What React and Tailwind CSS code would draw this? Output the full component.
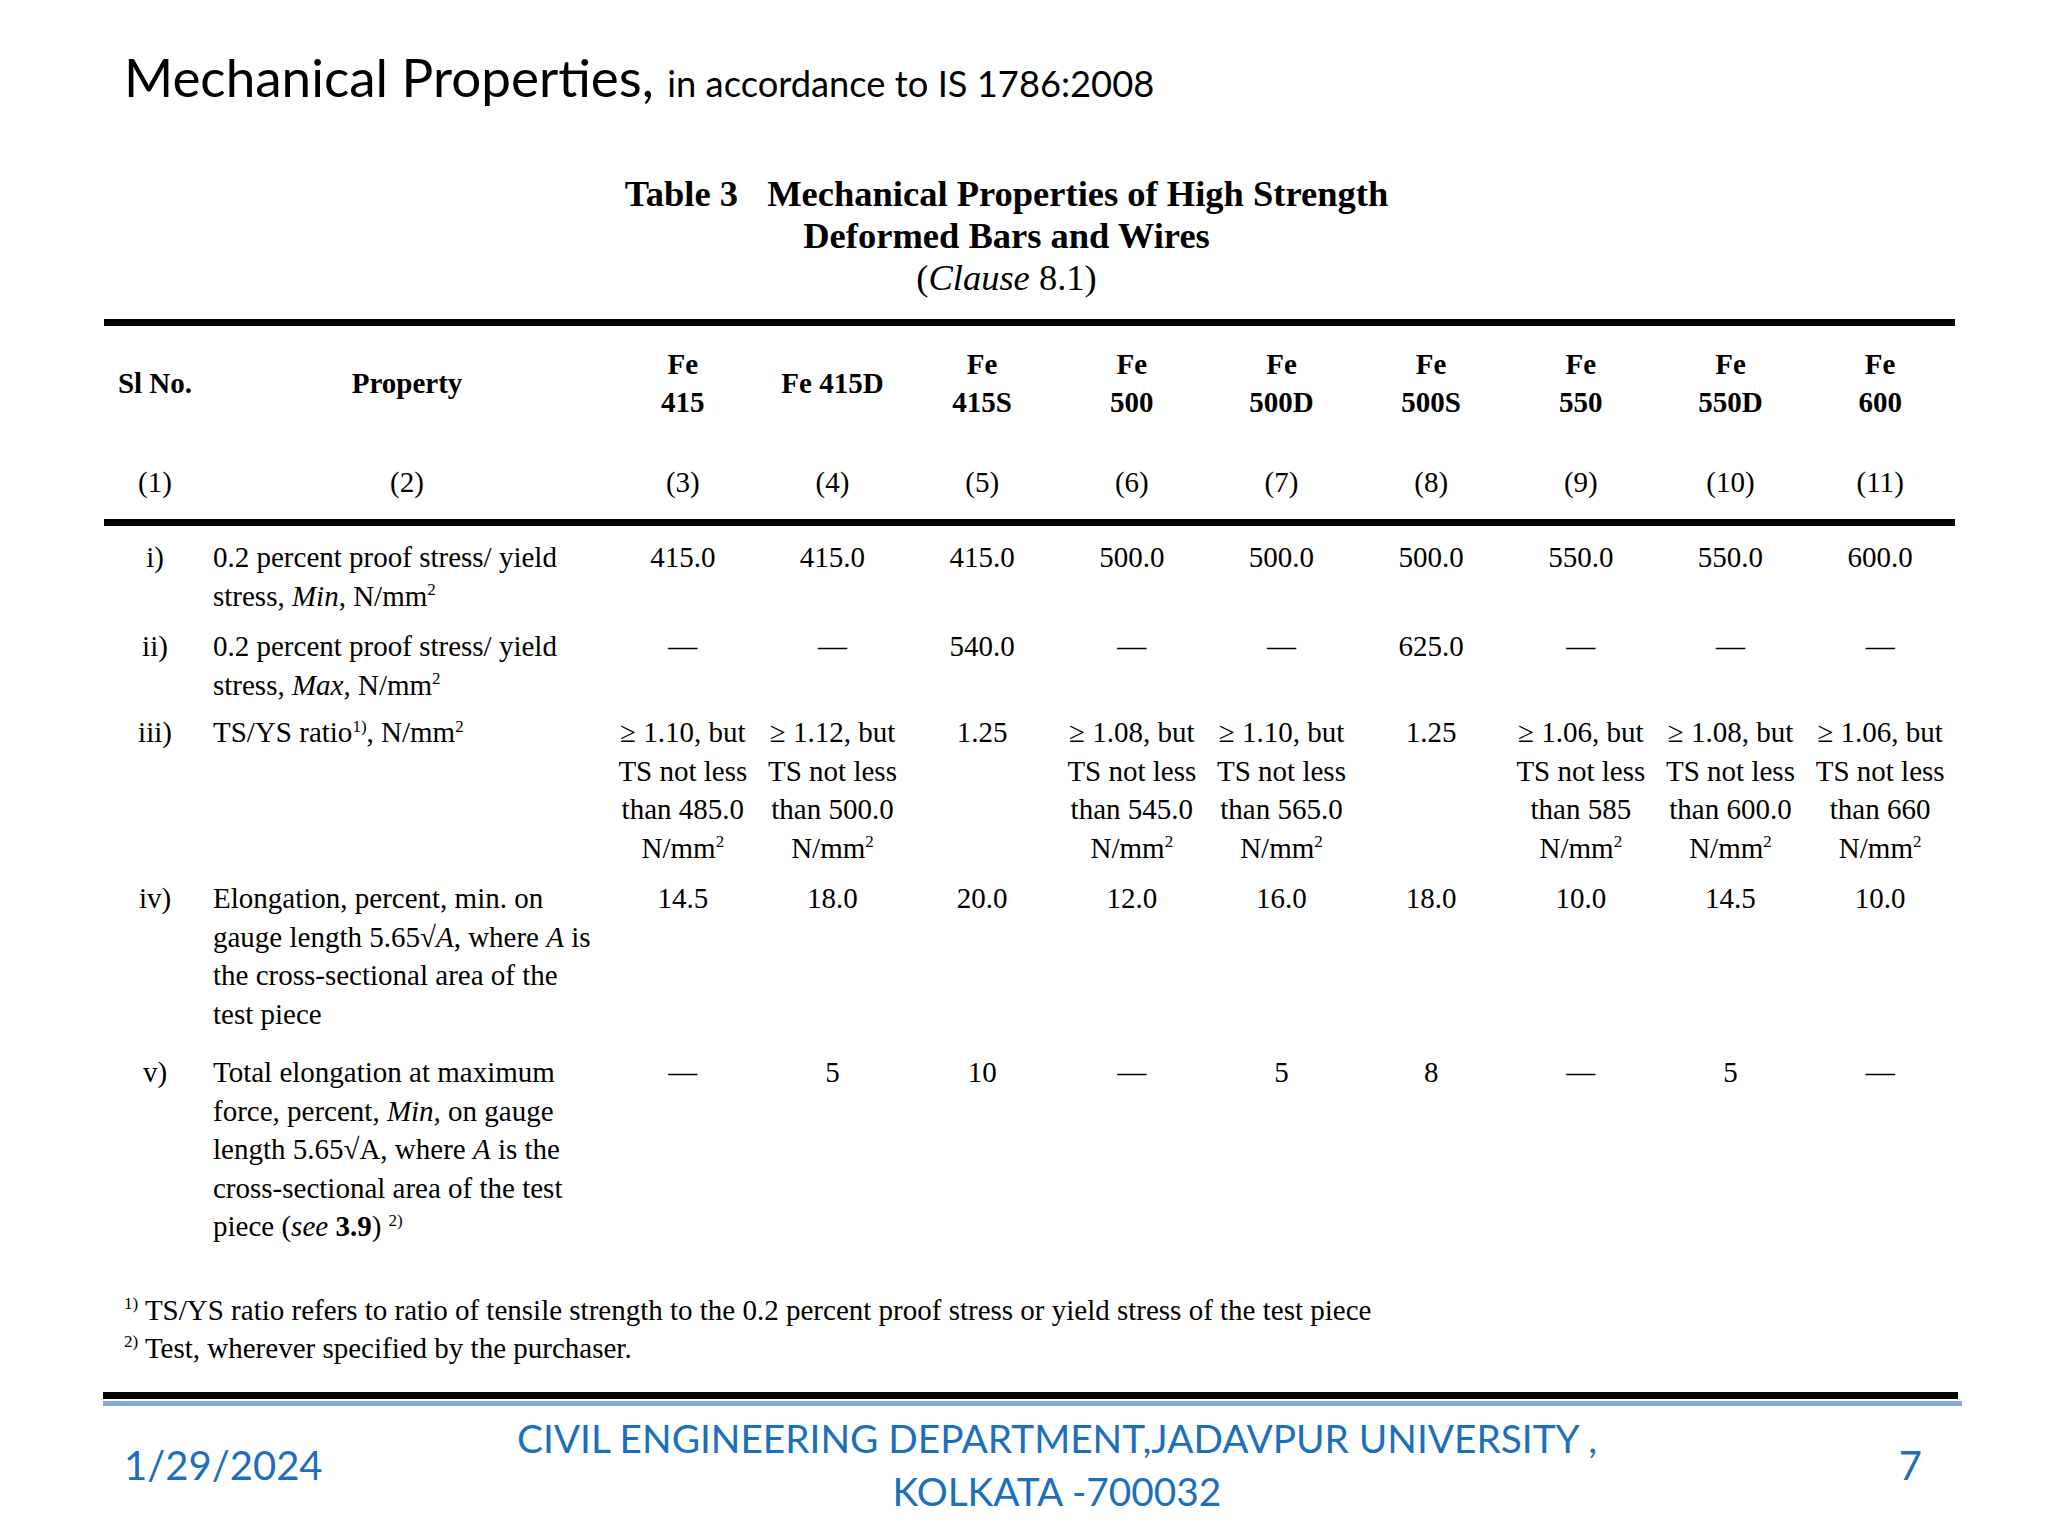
const Sup = ({ children }) => <sup className="text-[17px] top-[-0.6em]">{children}</sup>;

const ts = (ratio, min) => (
  <>
    ≥ {ratio}, but
    <br />
    TS not less
    <br />
    than {min}
    <br />
    N/mm<Sup>2</Sup>
  </>
);

const grades = [
  <>Fe<br />415</>,
  <>Fe 415D</>,
  <>Fe<br />415S</>,
  <>Fe<br />500</>,
  <>Fe<br />500D</>,
  <>Fe<br />500S</>,
  <>Fe<br />550</>,
  <>Fe<br />550D</>,
  <>Fe<br />600</>,
];

const rows = [
  {
    no: 'i)',
    pad: 'pt-[12px]',
    prop: <>0.2 percent proof stress/ yield<br />stress, <i>Min</i>, N/mm<Sup>2</Sup></>,
    vals: ['415.0', '415.0', '415.0', '500.0', '500.0', '500.0', '550.0', '550.0', '600.0'],
  },
  {
    no: 'ii)',
    pad: 'pt-[12px]',
    prop: <>0.2 percent proof stress/ yield<br />stress, <i>Max</i>, N/mm<Sup>2</Sup></>,
    vals: ['—', '—', '540.0', '—', '—', '625.0', '—', '—', '—'],
  },
  {
    no: 'iii)',
    pad: 'pt-[9px]',
    prop: <>TS/YS ratio<Sup>1)</Sup>, N/mm<Sup>2</Sup></>,
    vals: [ts('1.10', '485.0'), ts('1.12', '500.0'), '1.25', ts('1.08', '545.0'), ts('1.10', '565.0'), '1.25', ts('1.06', '585'), ts('1.08', '600.0'), ts('1.06', '660')],
  },
  {
    no: 'iv)',
    pad: 'pt-[12px]',
    prop: <>Elongation, percent, min. on<br />gauge length 5.65√<i>A</i>, where <i>A</i> is<br />the cross-sectional area of the<br />test piece</>,
    vals: ['14.5', '18.0', '20.0', '12.0', '16.0', '18.0', '10.0', '14.5', '10.0'],
  },
  {
    no: 'v)',
    pad: 'pt-[20px]',
    prop: <>Total elongation at maximum<br />force, percent, <i>Min,</i> on gauge<br />length 5.65√A, where <i>A</i> is the<br />cross-sectional area of the test<br />piece (<i>see</i> <b>3.9</b>) <Sup>2)</Sup></>,
    vals: ['—', '5', '10', '—', '5', '8', '—', '5', '—'],
  },
];

const cols = 'grid grid-cols-[102px_402px_repeat(9,1fr)]';

export default function App() {
  return (
    <div className="w-[2048px] h-[1536px] bg-white text-black overflow-hidden">
      {/* slide title */}
      <h1 className="pl-[124px] pt-[45px] leading-[64px] font-['Lato',_sans-serif] text-[53px] whitespace-nowrap">
        Mechanical Properties, <span className="text-[36.3px]">in accordance to IS 1786:2008</span>
      </h1>

      <div className="ml-[104px] mr-[93px] font-['Liberation_Serif',_'Times_New_Roman',_serif]">
        {/* caption */}
        <div className="mt-[58px] pr-[46px] text-center text-[36.5px] leading-[42px]">
          <div className="font-bold">
            <span className="mr-[20px]">Table 3</span> Mechanical Properties of High Strength
          </div>
          <div className="font-bold">Deformed Bars and Wires</div>
          <div>
            (<i>Clause</i> 8.1)
          </div>
        </div>

        <div className="mt-[20px] h-[7px] bg-black" />

        {/* header */}
        <div className="text-[29px] leading-[38px] pt-[19px] pb-[18px]">
          <div className={`${cols} items-center font-bold h-[76px]`}>
            <div className="text-center whitespace-nowrap">Sl No.</div>
            <div className="text-center">Property</div>
            {grades.map((g, i) => (
              <div key={i} className="text-center whitespace-nowrap">{g}</div>
            ))}
          </div>
          <div className={`${cols} mt-[42px]`}>
            {Array.from({ length: 11 }, (_, i) => (
              <div key={i} className="text-center">({i + 1})</div>
            ))}
          </div>
        </div>

        <div className="h-[7px] bg-black" />

        {/* body */}
        <div className="text-[29px] leading-[38.5px]">
          {rows.map((r) => (
            <div key={r.no} className={`${cols} ${r.pad}`}>
              <div className="text-center">{r.no}</div>
              <div className="pl-[7px] whitespace-nowrap">{r.prop}</div>
              {r.vals.map((v, i) => (
                <div key={i} className="text-center whitespace-nowrap">{v}</div>
              ))}
            </div>
          ))}
        </div>

        {/* footnotes */}
        <div className="mt-[45px] pl-[20px] text-[29px] leading-[38px] whitespace-nowrap">
          <div>
            <Sup>1)</Sup> TS/YS ratio refers to ratio of tensile strength to the 0.2 percent proof stress or yield stress of the test piece
          </div>
          <div>
            <Sup>2)</Sup> Test, wherever specified by the purchaser.
          </div>
        </div>
      </div>

      {/* bottom rules */}
      <div className="mt-[25px] ml-[103px] w-[1855px] h-[7px] bg-black" />
      <div className="mt-[2px] ml-[103px] w-[1859px] h-[5px] bg-[#86a8d4]" />

      {/* footer */}
      <div className="mt-[6px] flex items-center pl-[124px] pr-[126px] font-['Lato',_sans-serif] text-[#1c70bb] text-[40px]">
        <div className="w-[300px] whitespace-nowrap">1/29/2024</div>
        <div className="flex-1 text-center text-[38.8px] leading-[53px] whitespace-nowrap">
          <div>CIVIL ENGINEERING DEPARTMENT,JADAVPUR UNIVERSITY ,</div>
          <div>KOLKATA -700032</div>
        </div>
        <div className="w-[232px] text-right">7</div>
      </div>
    </div>
  );
}
